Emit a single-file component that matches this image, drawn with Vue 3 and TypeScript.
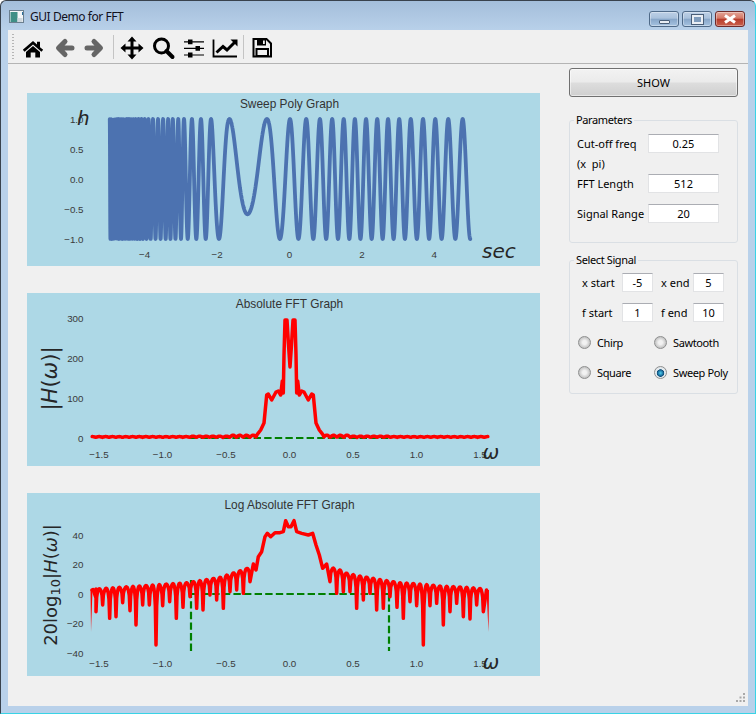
<script setup lang="ts">
type Pt = [number, number]

const toPath = (pts: Pt[]) =>
  'M' + pts.map(p => p[0].toFixed(2) + ' ' + p[1].toFixed(2)).join('L')

// --- sweep poly: phase (in cycles) read off the peaks of the reference
const knots: Pt[] = [
  [-3.8, 9], [-3.66, 8], [-3.52, 7], [-3.38, 6], [-3.25, 5], [-3.1, 4], [-2.94, 3], [-2.72, 2], [-2.47, 1],
  [-2.19, 0], [-1.97, -0.5], [-1.68, -1], [-1.18, -1.35], [-0.64, -1], [-0.28, -0.5], [0, 0],
  [0.45, 1], [0.83, 2], [1.17, 3], [1.49, 4], [1.8, 5], [2.11, 6], [2.42, 7], [2.72, 8],
  [3.03, 9], [3.35, 10], [3.69, 11], [4.03, 12], [4.39, 13], [4.79, 14], [5, 14.5],
]

function slope(i: number) {
  if (knots[i][0] === -1.18) return 0
  const a = knots[Math.max(i - 1, 0)]
  const b = knots[Math.min(i + 1, knots.length - 1)]
  return (b[1] - a[1]) / (b[0] - a[0])
}

function phase(x: number) {
  if (x < -3.8) {
    const v = -3.8 - x
    return 9 + 7.3 * v + 6 * v * v + 1.5 * v * v * v
  }
  let i = 0
  while (i < knots.length - 2 && x > knots[i + 1][0]) i++
  const [x0, y0] = knots[i]
  const [x1, y1] = knots[i + 1]
  const h = x1 - x0
  const t = (x - x0) / h
  const t2 = t * t
  const t3 = t2 * t
  return (2 * t3 - 3 * t2 + 1) * y0 + (t3 - 2 * t2 + t) * h * slope(i) +
    (-2 * t3 + 3 * t2) * y1 + (t3 - t2) * h * slope(i + 1)
}

const sweep: Pt[] = []
for (let i = 0; i <= 5000; i++) {
  const x = -5 + i * 0.002
  sweep.push([290 + x * 36.05, 179 - 60 * Math.cos(2 * Math.PI * phase(x))])
}

// --- absolute FFT, symmetric about the centre
const absHalf: Pt[] = [
  [0, 367], [1.5, 345], [3, 320], [5, 320], [6, 355], [6.7, 393], [7.7, 381], [9.3, 395],
  [11.7, 391], [14, 392], [18.3, 400], [21.7, 394], [23.3, 395], [26, 423], [29.3, 430], [32.7, 434.3],
]
for (let d = 34; d <= 198; d += 0.6) {
  const amp = d < 60 ? 2.2 : d < 100 ? 1.2 : 0.8
  absHalf.push([d, 437.4 - Math.abs(Math.sin((d * Math.PI) / 6.7)) * amp])
}
const absCurve: Pt[] = [
  ...absHalf.slice(1).reverse().map(p => [290 - p[0], p[1]] as Pt),
  ...absHalf.map(p => [290 + p[0], p[1]] as Pt),
]

// --- log FFT: dips and envelope measured from the reference
const lerp = (tbl: Pt[], x: number) => {
  if (x <= tbl[0][0]) return tbl[0][1]
  for (let i = 1; i < tbl.length; i++) {
    if (x <= tbl[i][0]) {
      const t = (x - tbl[i - 1][0]) / (tbl[i][0] - tbl[i - 1][0])
      return tbl[i - 1][1] + t * (tbl[i][1] - tbl[i - 1][1])
    }
  }
  return tbl[tbl.length - 1][1]
}

const leftEnv: Pt[] = [[92, 589.3], [153, 585], [187, 582.7], [220, 577.3], [240, 570.7], [247, 568.3], [253, 564]]
const rightEnv: Pt[] = [[333, 568], [340, 570], [347, 573.3], [360, 576], [373, 578.3], [387, 580.7], [400, 582.7],
  [420, 584], [440, 586], [467, 587.3], [488, 589.3]]

const leftDips: Pt[] = [[228, 365], [248, 345], [269, 385], [288, 380], [308, 338], [330, 362], [348, 405], [368, 345],
  [388, 345], [408, 465], [428, 347], [449, 335], [469, 385], [489, 352], [510, 320], [530, 355], [549, 360],
  [570, 315], [590, 330], [610, 355], [630, 305], [650, 300], [670, 310], [690, 275]]
  .map(([x, y]) => [x / 3 + 20, y / 3 + 490] as Pt)

const rightDips: Pt[] = [[150, 275], [170, 310], [190, 305], [210, 305], [230, 355], [250, 330], [270, 310], [290, 360],
  [310, 355], [330, 320], [351, 352], [370, 385], [390, 335], [410, 347], [430, 465], [450, 347], [470, 340],
  [490, 405], [510, 365], [530, 340], [550, 380], [570, 387], [590, 345], [610, 365]]
  .map(([x, y]) => [x / 3 + 280, y / 3 + 490] as Pt)

function ripple(dips: Pt[], env: Pt[]) {
  const out: Pt[] = []
  for (let i = 0; i < dips.length - 1; i++) {
    const [x0, y0] = dips[i]
    const [x1, y1] = dips[i + 1]
    for (let k = 0; k < 10; k++) {
      const t = k / 10
      const x = x0 + (x1 - x0) * t
      const y = y0 + (y1 - y0) * t
      out.push([x, y + (lerp(env, x) - y) * Math.pow(Math.sin(Math.PI * t), 0.4)])
    }
  }
  out.push(dips[dips.length - 1])
  return out
}

const centre: Pt[] = [[700, 222], [708, 240], [715, 200], [725, 185], [735, 140], [742, 130], [752, 140], [765, 128], [780, 128], [790, 125], [797, 92]]
  .map(([x, y]) => [x / 3 + 20, y / 3 + 490] as Pt)
const centre2: Pt[] = [[25, 110], [33, 110], [42, 92], [50, 125], [65, 130], [85, 135], [98, 130], [108, 165], [118, 195], [128, 235], [140, 222]]
  .map(([x, y]) => [x / 3 + 280, y / 3 + 490] as Pt)

const logCurve: Pt[] = [
  [92, 590], [93, 589.5], [96, 598],
  ...ripple([[96, 600], ...leftDips], leftEnv),
  ...centre, ...centre2,
  ...ripple(rightDips, rightEnv),
  [486.5, 590],
]

interface Tick { x: number; y: number; t: string; a?: string }

const xw = [-1.5, -1, -0.5, 0, 0.5, 1, 1.5]
const fmtW = (v: number) => (v < 0 ? '−' : '') + Math.abs(v).toFixed(1)

const plots = [
  {
    id: 'sweep', top: 93, h: 173, title: 'Sweep Poly Graph', titleY: 108,
    ticks: [
      ...[-4, -2, 0, 2, 4].map(v => ({ x: 289.5 + v * 36.2, y: 258, t: v < 0 ? '−' + -v : '' + v, a: 'middle' })),
      ...[[1, 119], [0.5, 149], [0, 179], [-0.5, 209], [-1, 239]].map(([v, y]) => ({ x: 83.5, y: y + 3.5, t: fmtW(v), a: 'end' })),
    ] as Tick[],
  },
  {
    id: 'abs', top: 293, h: 173, title: 'Absolute FFT Graph', titleY: 308,
    ticks: [
      ...xw.map(v => ({ x: 289.5 + v * 127, y: 458, t: fmtW(v), a: 'middle' })),
      ...[[300, 318.5], [200, 358.5], [100, 398.5], [0, 438]].map(([v, y]) => ({ x: 83.5, y: y + 3.5, t: '' + v, a: 'end' })),
    ] as Tick[],
  },
  {
    id: 'log', top: 493, h: 183, title: 'Log Absolute FFT Graph', titleY: 509,
    ticks: [
      ...xw.map(v => ({ x: 289.5 + v * 127, y: 667, t: fmtW(v), a: 'middle' })),
      ...[[40, 535], [20, 564.7], [0, 594.3], [-20, 623.7], [-40, 653]].map(([v, y]) => ({ x: 83.5, y: y + 3.5, t: v < 0 ? '−' + -v : '' + v, a: 'end' })),
    ] as Tick[],
  },
]

const sweepPath = toPath(sweep)
const absPath = toPath(absCurve)
const logPath = toPath(logCurve)
</script>

<template>
  <div class="window">
    <div class="titlebar">
      <svg class="app-icon" width="16" height="14" viewBox="0 0 16 14">
        <rect x="0.5" y="0.5" width="14" height="12" fill="#f4f6f8" stroke="#6b7f8f" />
        <rect x="1.5" y="2" width="7" height="10" fill="#3f8f86" />
        <rect x="8.5" y="8" width="5" height="4" fill="#cfd8de" />
        <rect x="13" y="2" width="1" height="3" fill="#2b6f9a" />
      </svg>
      <span class="title">GUI Demo for FFT</span>
      <div class="caption-buttons">
        <div class="cap"><span class="glyph-min"></span></div>
        <div class="cap"><span class="glyph-max"></span></div>
        <div class="cap cap-close">
          <svg width="14" height="10" viewBox="0 0 14 10"><path d="M2 1.5 L12 8.5 M12 1.5 L2 8.5" stroke="#fff" stroke-width="3" /></svg>
        </div>
      </div>
    </div>

    <div class="client">
      <div class="toolbar">
        <span class="grip"></span>
        <svg class="tool-icons" width="270" height="30" viewBox="14 33 270 30">
          <!-- home -->
          <path d="M33 41 L22.8 49.8 L24.6 51.8 L33 44.6 L41.4 51.8 L43.2 49.8 L40 47.2 V41.8 H37 V44.5 Z" />
          <path d="M26 52 L33 46 L40 52 V57.5 H35.3 V52.5 H30.7 V57.5 H26 Z" />
          <!-- back / forward -->
          <g fill="none" stroke="#666" stroke-width="5" stroke-linejoin="round" stroke-linecap="round">
            <path d="M72 48 H59 M65 41.5 L58.5 48 L65 54.5" />
            <path d="M87 48 H100 M94 41.5 L100.5 48 L94 54.5" />
          </g>
          <line x1="113.5" y1="35" x2="113.5" y2="59" class="sep" />
          <!-- move -->
          <path d="M132 36.5 L136.5 41.5 H133.5 V46.5 H138.5 V43.5 L143.5 48 L138.5 52.5 V49.5 H133.5 V54.5 H136.5 L132 59.5 L127.5 54.5 H130.5 V49.5 H125.5 V52.5 L120.5 48 L125.5 43.5 V46.5 H130.5 V41.5 H127.5 Z" />
          <!-- zoom -->
          <circle cx="161.5" cy="46" r="7" fill="none" stroke="#000" stroke-width="3" />
          <path d="M166.5 51 L172.5 57" stroke="#000" stroke-width="4" stroke-linecap="round" />
          <!-- sliders -->
          <path d="M184 41.2 H204 V42.4 H184 Z M184 47.8 H204 V49 H184 Z M184 54.4 H204 V55.6 H184 Z" />
          <path d="M188 39.5 H192.5 V44.2 H188 Z M195.5 46 H200 V50.8 H195.5 Z M188 52.6 H192.5 V57.4 H188 Z" />
          <!-- chart -->
          <path d="M213.5 39.5 V56.5 H237" fill="none" stroke="#000" stroke-width="1.8" />
          <path d="M216.5 52.5 L223 46.5 L227 50 L235 42" fill="none" stroke="#000" stroke-width="3" />
          <path d="M230.5 39.5 H237.5 V46.5 Z" />
          <line x1="243.5" y1="35" x2="243.5" y2="59" class="sep" />
          <!-- save -->
          <path d="M253.5 39 H266.5 L271 43.5 V56.5 H253.5 Z" fill="none" stroke="#000" stroke-width="2" />
          <path d="M257 39 H266 V45.5 H257 Z M263 40.5 V44 H264.8 V40.5 Z" fill-rule="evenodd" />
          <path d="M256.5 49 H268 V56 H256.5 Z" fill="none" stroke="#000" stroke-width="2" />
        </svg>
      </div>

      <div class="main">
        <div class="plots">
          <svg
            v-for="p in plots"
            :key="p.id"
            class="plot"
            width="513"
            :height="p.h"
            :viewBox="`27 ${p.top} 513 ${p.h}`"
          >
            <text x="289.5" :y="p.titleY" class="plot-title">{{ p.title }}</text>

            <template v-if="p.id === 'sweep'">
              <path :d="sweepPath" class="line-blue" />
            </template>
            <template v-else-if="p.id === 'abs'">
              <path d="M190 438 H389" class="line-green" />
              <path :d="absPath" class="line-red" />
            </template>
            <template v-else>
              <path d="M191 580 V651 M191 594 H389 V580 M389 594 V651" class="line-green" />
              <path :d="logPath" class="line-red" />
              <path d="M90.5 590 L92.5 590 L91 632 Z M486.5 590 L489 590 L488.5 632 Z" fill="#ff0000" />
            </template>

            <text
              v-for="(t, i) in p.ticks"
              :key="i"
              :x="t.x"
              :y="t.y"
              :text-anchor="t.a"
              class="tick"
            >{{ t.t }}</text>

            <template v-if="p.id === 'sweep'">
              <text x="77" y="125" class="math">h</text>
              <text x="482" y="258" class="math">sec</text>
            </template>
            <template v-else-if="p.id === 'abs'">
              <text x="482.5" y="459" class="math">ω</text>
              <text transform="translate(57 378.5) rotate(-90)" text-anchor="middle" class="math-up">|<tspan class="it">H</tspan>(<tspan class="it">ω</tspan>)|</text>
            </template>
            <template v-else>
              <text x="482.5" y="669" class="math">ω</text>
              <text transform="translate(57 585) rotate(-90)" text-anchor="middle" class="math-log">20log<tspan dy="3" font-size="13">10</tspan><tspan dy="-3">|</tspan><tspan class="it">H</tspan>(<tspan class="it">ω</tspan>)|</text>
            </template>
          </svg>
        </div>

        <div class="side">
          <button class="show-btn">SHOW</button>

          <fieldset class="group params">
            <legend>Parameters</legend>
            <div class="row">
              <label>Cut-off freq</label>
              <input class="field wide" value="0.25" />
            </div>
            <div class="row note"><label>(x&nbsp; pi)</label></div>
            <div class="row">
              <label>FFT Length</label>
              <input class="field wide" value="512" />
            </div>
            <div class="row range">
              <label>Signal Range</label>
              <input class="field wide" value="20" />
            </div>
          </fieldset>

          <fieldset class="group signal">
            <legend>Select Signal</legend>
            <div class="pair">
              <label class="l1">x start</label>
              <input class="field small" value="-5" />
              <label class="l2">x end</label>
              <input class="field small" value="5" />
            </div>
            <div class="pair second">
              <label class="l1">f start</label>
              <input class="field small" value="1" />
              <label class="l2">f end</label>
              <input class="field small" value="10" />
            </div>
            <div class="radios">
              <label class="radio"><input type="radio" name="sig" />Chirp</label>
              <label class="radio"><input type="radio" name="sig" />Sawtooth</label>
              <label class="radio"><input type="radio" name="sig" />Square</label>
              <label class="radio"><input type="radio" name="sig" checked />Sweep Poly</label>
            </div>
          </fieldset>
        </div>
      </div>

      <svg class="size-grip" width="12" height="12" viewBox="0 0 12 12" fill="#a8a8a8">
        <rect x="8" y="0" width="2" height="2" /><rect x="4.5" y="3.5" width="2" height="2" /><rect x="8" y="3.5" width="2" height="2" />
        <rect x="1" y="7" width="2" height="2" /><rect x="4.5" y="7" width="2" height="2" /><rect x="8" y="7" width="2" height="2" />
      </svg>
    </div>
  </div>
</template>

<style>
html, body { margin: 0; background: #fff; }
</style>

<style scoped>
.window {
  width: 756px;
  height: 714px;
  box-sizing: border-box;
  display: flex;
  flex-direction: column;
  padding: 0 7px 7px 7px;
  border: 1px solid #39d3e6;
  border-top-color: #39424d;
  border-left-color: #39424d;
  border-radius: 6px 6px 0 0;
  background: linear-gradient(180deg, #a4bedb 0, #b9d1ea 30px);
  font-family: "Noto Sans", Tahoma, sans-serif;
  font-size: 11px;
  color: #000;
  overflow: hidden;
}

.titlebar {
  height: 29px;
  flex: none;
  display: flex;
  align-items: center;
}

.app-icon { margin: 2px 5px 0 1px; }

.title {
  font-size: 12px;
  color: #10101c;
  margin-top: 2px;
  letter-spacing: -0.45px;
}

.caption-buttons {
  margin-left: auto;
  display: flex;
  gap: 3px;
  margin-right: 3px;
  margin-top: 1px;
  align-self: flex-start;
  padding-top: 9px;
}

.cap {
  width: 30px;
  height: 16px;
  box-sizing: border-box;
  border: 1px solid #4f6a88;
  border-radius: 3px;
  background: linear-gradient(180deg, #bdd0e6 0, #a9c1dc 45%, #87a6c8 50%, #a5c2e0 100%);
  box-shadow: inset 0 0 0 1px rgba(255, 255, 255, 0.35);
  display: flex;
  align-items: center;
  justify-content: center;
}

.cap-close {
  border-color: #6e2a2a;
  background: linear-gradient(180deg, #e2a497 0, #d47766 45%, #b83c2c 50%, #c9604c 100%);
}

.glyph-min {
  width: 11px;
  height: 4px;
  margin-top: 5px;
  box-sizing: border-box;
  background: #e9eef4;
  border: 1px solid #4a5f78;
  border-radius: 1px;
}

.glyph-max {
  width: 11px;
  height: 9px;
  box-sizing: border-box;
  border: 2px solid #e9eef4;
  outline: 1px solid #4a5f78;
  background: #7f9cbc;
}

.client {
  position: relative;
  flex: 1;
  min-height: 0;
  background: #f0f0f0;
  display: flex;
  flex-direction: column;
}

.toolbar {
  height: 33px;
  flex: none;
  border-bottom: 1px solid #b4b4b4;
  position: relative;
}

.grip {
  position: absolute;
  left: 4px;
  top: 4px;
  width: 2px;
  height: 26px;
  background: repeating-linear-gradient(180deg, #b5b5b5 0 1px, transparent 1px 3px);
}

.tool-icons {
  position: absolute;
  left: 6px;
  top: 3px;
}

.sep { stroke: #c4c4c4; stroke-width: 1; }

.main {
  flex: 1;
  display: flex;
  min-height: 0;
}

.plots {
  margin: 29px 0 0 19px;
  display: flex;
  flex-direction: column;
  gap: 27px;
}

.plot {
  display: block;
  background: #add8e6;
}

.plot-title {
  font-family: "Liberation Sans", Arial, sans-serif;
  font-size: 11.9px;
  fill: #333;
  text-anchor: middle;
}

.tick {
  font-family: "Liberation Sans", Arial, sans-serif;
  font-size: 9.8px;
  fill: #3a3a3a;
}

.math {
  font-family: "DejaVu Sans", sans-serif;
  font-style: italic;
  font-size: 20px;
  fill: #262626;
}

.math-up {
  font-family: "DejaVu Sans", sans-serif;
  font-size: 21px;
  fill: #262626;
}

.math-log {
  font-family: "DejaVu Sans", sans-serif;
  font-size: 18px;
  fill: #262626;
}

.it { font-style: italic; }

.line-blue {
  fill: none;
  stroke: #4c72b0;
  stroke-width: 3.8;
  stroke-linejoin: round;
  stroke-linecap: round;
}

.line-red {
  fill: none;
  stroke: #ff0000;
  stroke-width: 3.5;
  stroke-linejoin: round;
  stroke-linecap: round;
}

.line-green {
  fill: none;
  stroke: #008000;
  stroke-width: 2.2;
  stroke-dasharray: 7.4 3.2;
}

.side {
  margin: 4px 0 0 29px;
  width: 169px;
  display: flex;
  flex-direction: column;
}

.show-btn {
  height: 29px;
  box-sizing: border-box;
  border: 1px solid #707070;
  border-radius: 3px;
  background: linear-gradient(180deg, #f2f2f2 0, #ebebeb 48%, #dddddd 52%, #cfcfcf 100%);
  box-shadow: inset 0 0 0 1px rgba(255, 255, 255, 0.5);
  font: inherit;
  color: #000;
  padding: 0;
}

.group {
  margin: 0;
  min-width: 0;
  box-sizing: border-box;
  border: 1px solid #dadfe4;
  border-radius: 3px;
  position: relative;
  padding: 0;
}

.group legend {
  padding: 0 2px;
  line-height: 12px;
  font-size: 11px;
  letter-spacing: -0.38px;
}

.params {
  margin-top: 17px;
  height: 129px;
  padding: 8px 0 0 7px;
}

.params legend { margin-left: -3px; }

.signal {
  margin-top: 11px;
  height: 140px;
  padding: 7px 0 0 12px;
}

.signal legend { margin-left: -8px; }

.row {
  display: flex;
  align-items: center;
  height: 19px;
}

.row label { width: 71px; }

.row.note {
  height: 21px;
}

.row.range { margin-top: 11px; }

.field {
  box-sizing: border-box;
  height: 19px;
  padding: 0;
  border: 1px solid #e2e3e5;
  border-top-color: #abadb3;
  background: #fff;
  text-align: center;
  font: inherit;
  color: #000;
  outline: none;
}

.field.wide { width: 71px; }
.field.small { width: 31px; }

.pair {
  display: flex;
  align-items: center;
  height: 19px;
}

.pair.second { margin-top: 11px; }
.l1 { width: 40px; }
.l2 { width: 32px; margin-left: 8px; }

.radios {
  margin: 5px 0 0 -4px;
  display: grid;
  grid-template-columns: 76px auto;
  grid-auto-rows: 30px;
}

.radio {
  display: flex;
  align-items: center;
  gap: 6px;
  letter-spacing: -0.38px;
}

.radio input {
  appearance: none;
  margin: 0;
  width: 13px;
  height: 13px;
  border-radius: 50%;
  border: 1px solid #8e8f8f;
  background: radial-gradient(circle, #f2f2f2 0 25%, #c9c9c9 65%, #b8b8b8 100%);
  box-sizing: border-box;
}

.radio input:checked {
  background: radial-gradient(circle at 50% 55%, #4fd0f0 0, #1c6f9f 32%, #0d4a73 42%, #e8eef2 50%, #d5d9dc 100%);
}

.size-grip {
  position: absolute;
  right: 1px;
  bottom: 1px;
}
</style>
